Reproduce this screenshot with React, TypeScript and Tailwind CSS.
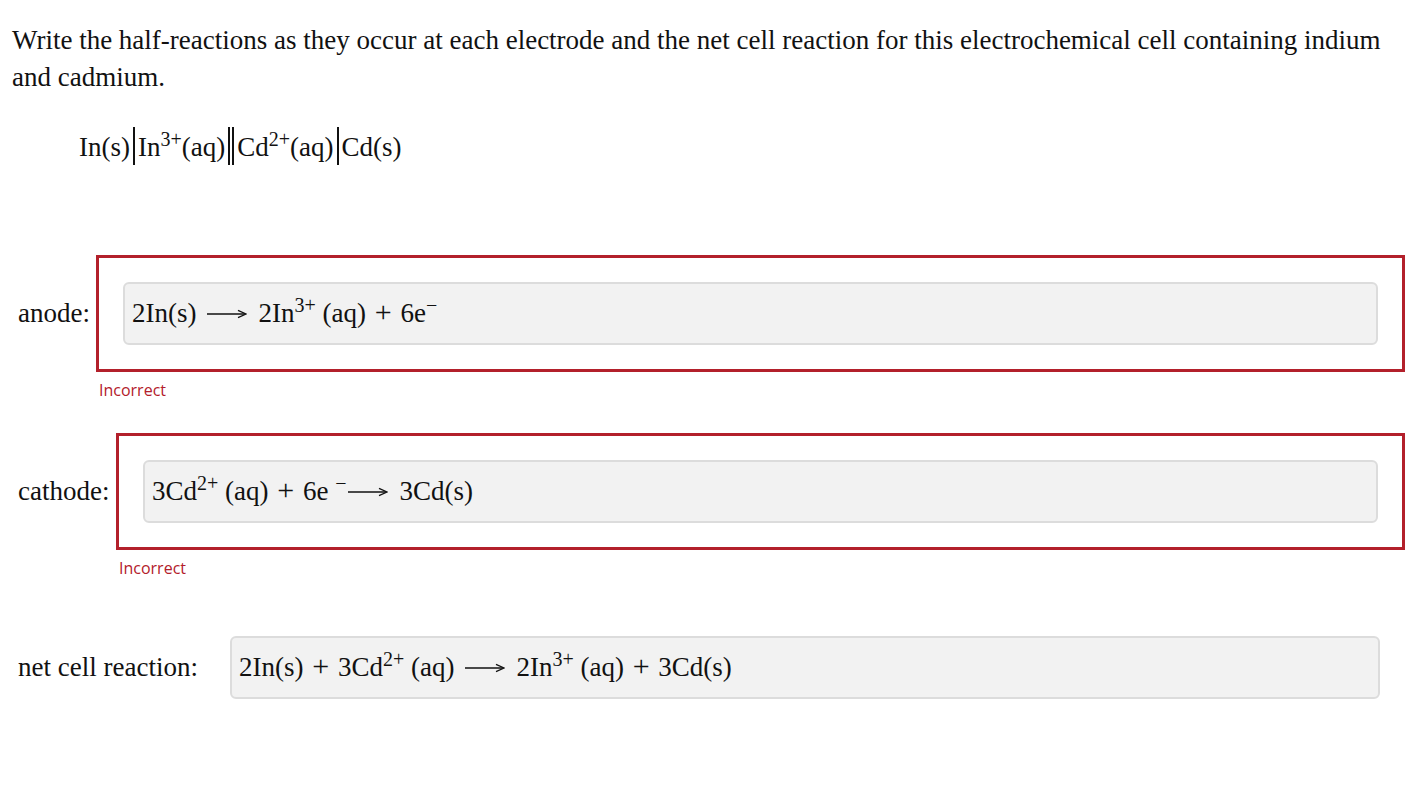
import React from 'react';

const serif = { fontFamily: '"Liberation Serif", "Times New Roman", serif' };

function Arrow({ className = '' }: { className?: string }) {
  return (
    <svg width="40" height="12" viewBox="0 0 40 12" className={`inline-block align-middle ${className}`}>
      <line x1="0" y1="6" x2="38" y2="6" stroke="#111" strokeWidth="1.3" />
      <path d="M31 2.4 L39 6 L31 9.6" fill="none" stroke="#111" strokeWidth="1.3" />
    </svg>
  );
}

function Bar({ double = false }: { double?: boolean }) {
  return (
    <span className="inline-flex gap-[2px] align-middle mx-[3px] relative -top-[1px]">
      <span className="inline-block w-[2px] h-[38px] bg-[#111]" />
      {double && <span className="inline-block w-[2px] h-[38px] bg-[#111]" />}
    </span>
  );
}

function Sup({ children }: { children: React.ReactNode }) {
  return <sup className="text-[20px] -top-[10px]">{children}</sup>;
}

function Plus() {
  return <span className="mx-[2px] text-[30px] leading-none">+</span>;
}

function AnswerBox({ children, className = '' }: { children: React.ReactNode; className?: string }) {
  return (
    <div
      className={`h-[63px] flex items-center pl-[7px] bg-[#f2f2f2] border-2 border-[#dcdcdc] rounded-[6px] text-[27px] whitespace-pre ${className}`}
    >
      {children}
    </div>
  );
}

function MarkedRow({ label, labelWidth, children }: { label: string; labelWidth: string; children: React.ReactNode }) {
  return (
    <div className="flex pl-[6px]">
      <div className={`${labelWidth} h-[117px] flex items-center text-[27px] shrink-0`}>{label}</div>
      <div className="flex-1 flex flex-col">
        <div className="border-[3px] border-[#b3202b] p-[24px]">
          <AnswerBox>{children}</AnswerBox>
        </div>
        <div
          className="mt-[8px] ml-[3px] text-[16px] leading-[20px] font-medium text-[#b3202b]"
          style={{ fontFamily: '"Open Sans", "Noto Sans", sans-serif' }}
        >
          Incorrect
        </div>
      </div>
    </div>
  );
}

export default function App() {
  return (
    <div className="min-h-screen bg-white text-[#111] pl-[12px] pr-[10px] pt-[22px]" style={serif}>
      <p className="text-[27px] leading-[37px]">
        Write the half-reactions as they occur at each electrode and the net cell reaction for this electrochemical cell
        containing indium and cadmium.
      </p>

      <div className="mt-[31px] pl-[67px] h-[40px] flex items-center text-[27px] whitespace-nowrap">
        <span>In(s)</span>
        <Bar />
        <span>
          In<Sup>3+</Sup>(aq)
        </span>
        <Bar double />
        <span>
          Cd<Sup>2+</Sup>(aq)
        </span>
        <Bar />
        <span>Cd(s)</span>
      </div>

      <div className="mt-[88px]">
        <MarkedRow label="anode:" labelWidth="w-[78px]">
          <span>2In(s)</span>
          <Arrow className="mx-[11px]" />
          <span>
            2In<Sup>3+</Sup> (aq) <Plus /> 6e<Sup>−</Sup>
          </span>
        </MarkedRow>
      </div>

      <div className="mt-[33px]">
        <MarkedRow label="cathode:" labelWidth="w-[98px]">
          <span>
            3Cd<Sup>2+</Sup> (aq) <Plus /> 6e <Sup>−</Sup>
          </span>
          <Arrow className="ml-[2px] mr-[11px]" />
          <span>3Cd(s)</span>
        </MarkedRow>
      </div>

      <div className="mt-[58px] flex items-center pl-[6px] pr-[25px]">
        <div className="w-[212px] text-[27px] shrink-0">net cell reaction:</div>
        <AnswerBox className="flex-1">
          <span>
            2In(s) <Plus /> 3Cd<Sup>2+</Sup> (aq)
          </span>
          <Arrow className="mx-[11px]" />
          <span>
            2In<Sup>3+</Sup> (aq) <Plus /> 3Cd(s)
          </span>
        </AnswerBox>
      </div>
    </div>
  );
}
